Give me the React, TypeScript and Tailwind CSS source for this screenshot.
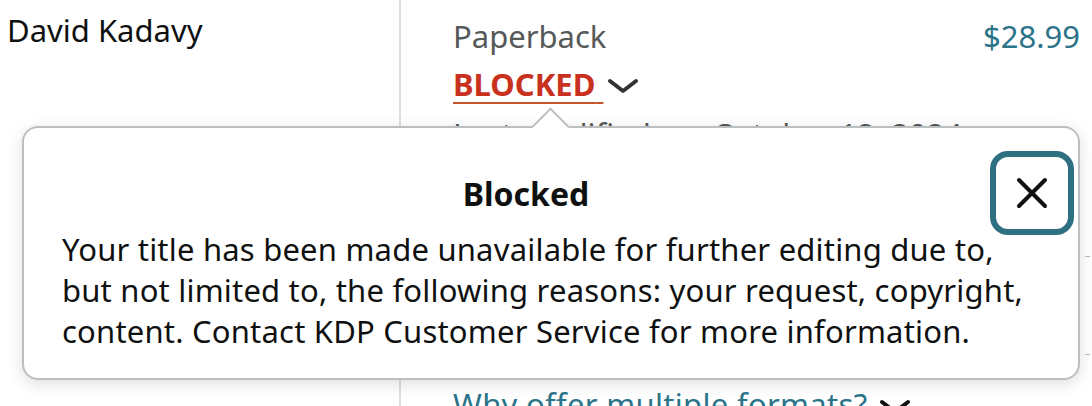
import React from 'react';

const bodyLines = [
  'Your title has been made unavailable for further editing due to,',
  'but not limited to, the following reasons: your request, copyright,',
  'content. Contact KDP Customer Service for more information.',
];

const Chevron = ({ className }: { className?: string }) => (
  <svg className={className} width="32" height="16" viewBox="0 0 32 16" fill="none">
    <path d="M3 3 L16 13 L29 3" stroke="currentColor" strokeWidth="4" strokeLinecap="round" strokeLinejoin="round" />
  </svg>
);

export default function App() {
  return (
    <div className="relative h-[406px] w-[1092px] overflow-hidden bg-white font-['Noto_Sans',sans-serif] text-[31px] leading-[41px] text-[#0f1111]">
      {/* Page behind the popover */}
      <div className="flex h-full">
        <div className="w-[401px] shrink-0 border-r-2 border-[#dddddd] pl-[7px] pt-[10px]">
          David Kadavy
        </div>
        <div className="flex flex-1 flex-col pl-[52px] pr-[12px] pt-[16px]">
          <div className="flex items-baseline justify-between">
            <span className="text-[#565959]">Paperback</span>
            <span className="text-[#2b7489]">$28.99</span>
          </div>
          <div className="mt-[7px] flex items-center">
            <span className="font-bold text-[#c9311f] underline decoration-[#c4552b] decoration-2 underline-offset-[6px]">
              BLOCKED{'\u00a0'}
            </span>
            <Chevron className="ml-[4px] mt-[2px] text-[#333333]" />
          </div>
          <div className="mt-[9px] text-[#565959]">Last modified on: October 12, 2024</div>
          <div className="mt-[49px] border-t border-[#e3e6e6]" />
          <div className="mt-[51px] flex justify-end">
            <span className="mr-[-10px] h-[1px] w-[5px] bg-[#bbbbbb]" />
          </div>
          <div className="mt-[97px] flex justify-end">
            <span className="mr-[-10px] h-[1px] w-[5px] bg-[#bbbbbb]" />
          </div>
          <div className="mt-[29px] flex items-center text-[#2b7489]">
            <span className="tracking-[0.3px]">Why offer multiple formats?</span>
            <Chevron className="ml-[12px] mt-[4px] text-[#111111]" />
          </div>
        </div>
      </div>

      {/* Blocked popover */}
      <div className="absolute left-[22px] top-[126px] w-[1058px] rounded-[16px] border-2 border-[#bbbfbf] bg-white pb-[26px] pl-[38px] pr-[4px] pt-[23px] shadow-[0_4px_16px_rgba(0,0,0,0.13)]">
        <div className="absolute left-[513px] top-[-15px] h-[27px] w-[27px] rotate-45 border-l-2 border-t-2 border-[#bbbfbf] bg-white" />
        <div className="flex items-start">
          <div className="mt-[22px] flex-1 text-center text-[32px] font-bold">Blocked</div>
          <button className="flex h-[84px] w-[84px] items-center justify-center rounded-[18px] border-[6px] border-[#2f6f82] bg-white">
            <svg width="32" height="32" viewBox="0 0 32 32" fill="none">
              <path d="M3 3 L29 29 M29 3 L3 29" stroke="#111111" strokeWidth="4" strokeLinecap="round" />
            </svg>
          </button>
        </div>
        <div className="-mt-[6px] tracking-[0.2px]">
          {bodyLines.map((line) => (
            <div key={line} className="whitespace-nowrap">
              {line}
            </div>
          ))}
        </div>
      </div>
    </div>
  );
}
